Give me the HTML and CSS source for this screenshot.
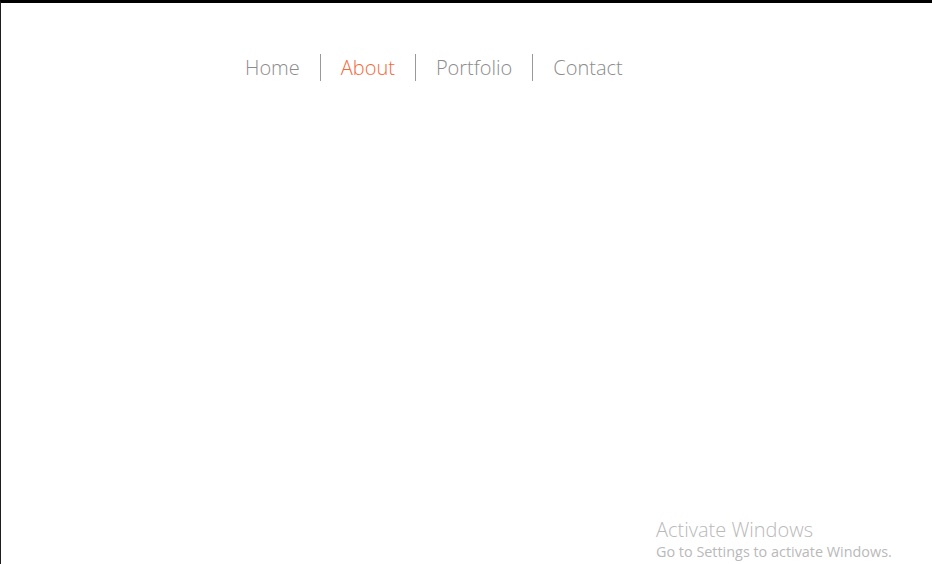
FILE: index.html
```html
<!DOCTYPE html>
<html lang="en">
<head>
<meta charset="utf-8">
<title>Nav</title>
<link rel="stylesheet" href="styles.css">
</head>
<body>
<div class="frame">
  <nav class="nav">
    <a class="nav-item" href="#">Home</a>
    <a class="nav-item active" href="#">About</a>
    <a class="nav-item" href="#">Portfolio</a>
    <a class="nav-item" href="#">Contact</a>
  </nav>
</div>
<div class="watermark">
  <div class="wm-title">Activate Windows</div>
  <div class="wm-sub">Go to Settings to activate Windows.</div>
</div>
</body>
</html>
```
FILE: styles.css
```css
html, body {
  margin: 0;
  padding: 0;
  height: 100%;
  background: #fff;
}
body {
  font-family: "Open Sans", "Liberation Sans", sans-serif;
  overflow: hidden;
}
.frame {
  box-sizing: border-box;
  height: 100%;
  border-top: 3px solid #000;
  border-left: 1px solid #1e1e1e;
  padding-top: 51px;
  padding-left: 224px;
}
.nav {
  display: flex;
}
.nav-item {
  font-size: 20px;
  font-weight: 300;
  line-height: 27px;
  color: #8c8c8c;
  text-decoration: none;
  padding: 0 20px;
  border-left: 1px solid #999;
}
.nav-item:first-child {
  border-left: none;
}
.nav-item.active {
  color: #f26a3a;
}
.watermark {
  position: absolute;
  left: 656px;
  top: 517px;
  color: #b9b9b9;
  font-family: "Open Sans", "Noto Sans", sans-serif;
}
.wm-title {
  font-size: 20px;
  font-weight: 300;
  line-height: 26px;
}
.wm-sub {
  font-size: 14.4px;
  line-height: 18px;
}
```
